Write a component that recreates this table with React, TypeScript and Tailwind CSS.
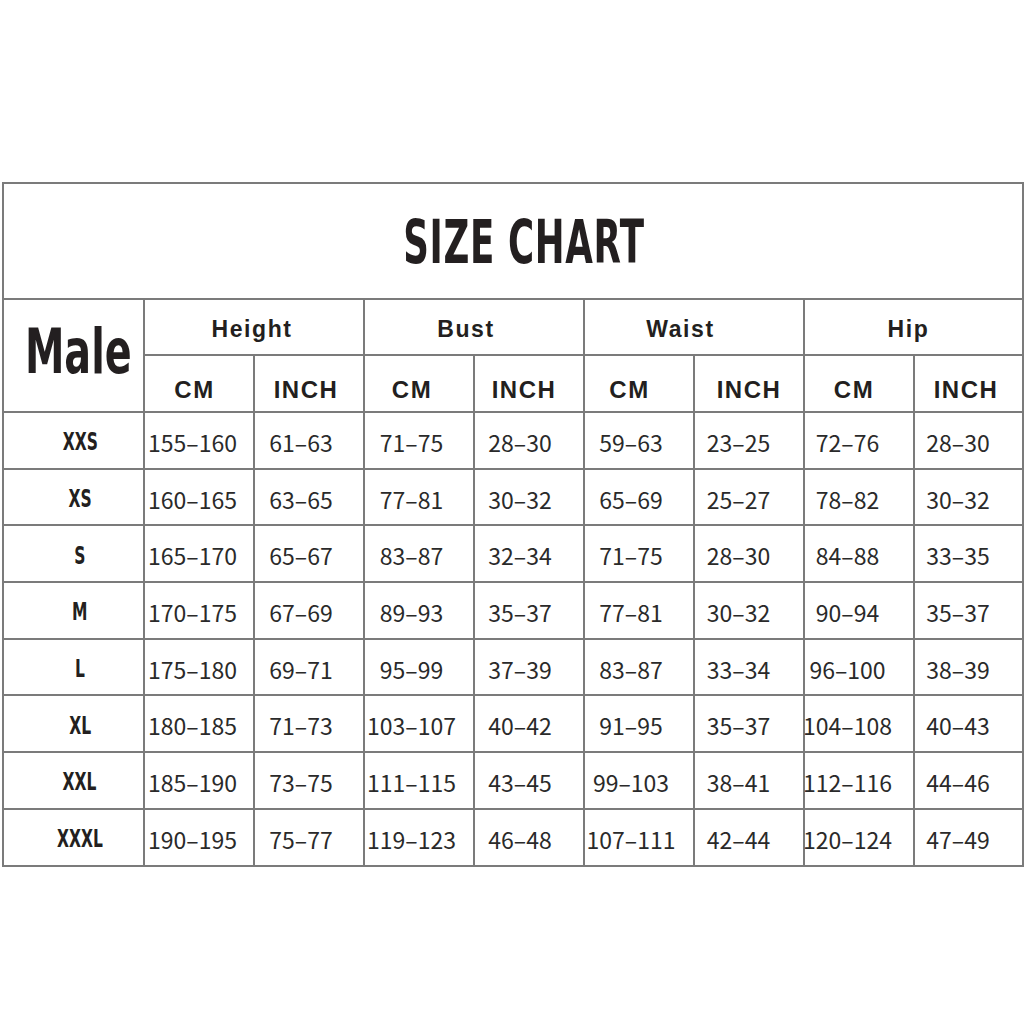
import React from "react";

const rows: [string, string[]][] = [
  ["XXS", ["155–160", "61–63", "71–75", "28–30", "59–63", "23–25", "72–76", "28–30"]],
  ["XS", ["160–165", "63–65", "77–81", "30–32", "65–69", "25–27", "78–82", "30–32"]],
  ["S", ["165–170", "65–67", "83–87", "32–34", "71–75", "28–30", "84–88", "33–35"]],
  ["M", ["170–175", "67–69", "89–93", "35–37", "77–81", "30–32", "90–94", "35–37"]],
  ["L", ["175–180", "69–71", "95–99", "37–39", "83–87", "33–34", "96–100", "38–39"]],
  ["XL", ["180–185", "71–73", "103–107", "40–42", "91–95", "35–37", "104–108", "40–43"]],
  ["XXL", ["185–190", "73–75", "111–115", "43–45", "99–103", "38–41", "112–116", "44–46"]],
  ["XXXL", ["190–195", "75–77", "119–123", "46–48", "107–111", "42–44", "120–124", "47–49"]],
];

const groups = [
  { name: "Height", pad: "pr-[4px]" },
  { name: "Bust", pad: "pr-[16px]" },
  { name: "Waist", pad: "pr-[27px]" },
  { name: "Hip", pad: "pr-[10px]" },
];

const subPads = ["pr-[9px]", "pr-[6px]", "pr-[14px]", "pr-[10px]", "pr-[19px]", "pr-[0px]", "pr-[10px]", "pr-[5px]"];
const numPads = ["pr-[13px]", "pr-[16px]", "pr-[15px]", "pr-[18px]", "pr-[16px]", "pr-[21px]", "pr-[23px]", "pr-[21px]"];

const narrow = "font-['DejaVu_Sans_Condensed','DejaVu_Sans',sans-serif] font-bold text-[#231f20]";
const din = "font-['Liberation_Sans',Arial,sans-serif] font-bold text-[#231f20]";
const num = "font-['Noto_Sans_CJK_SC','Noto_Sans',sans-serif] font-normal text-[#2a2a2a]";

const App = () => {
  return (
    <div className="w-[1024px] h-[1024px] bg-white pt-[182px] pl-[2px]">
      <div className="grid grid-cols-[139px_repeat(7,108px)_107px] grid-rows-[114px_54px_55px_repeat(8,54.7px)] gap-[2px] p-[2px] bg-[#7b7b7b] w-[1022px]">
        <div className="col-span-9 bg-white flex items-center justify-center pl-[22px] pt-[2px]">
          <span className={`${narrow} inline-block whitespace-nowrap text-[60px] leading-none scale-x-[0.66] tracking-[1px]`}>
            SIZE CHART
          </span>
        </div>

        <div className="row-span-2 bg-white flex items-center justify-center pl-[10px] pb-[8px]">
          <span className={`${narrow} inline-block text-[63px] leading-none scale-x-[0.7]`}>Male</span>
        </div>
        {groups.map((g) => (
          <div
            key={g.name}
            className={`col-span-2 bg-white flex items-center justify-center pt-[4px] ${g.pad}`}
          >
            <span className={`${din} text-[23px] tracking-[1.6px] leading-none`}>{g.name}</span>
          </div>
        ))}
        {subPads.map((p, i) => (
          <div key={i} className={`bg-white flex items-center justify-center pt-[12px] ${p}`}>
            <span className={`${din} text-[24px] tracking-[1.5px] leading-none`}>
              {i % 2 === 0 ? "CM" : "INCH"}
            </span>
          </div>
        ))}

        {rows.map(([size, vals]) => (
          <React.Fragment key={size}>
            <div className="bg-white flex items-center justify-center pl-[13px] pt-[4px]">
              <span className={`${narrow} inline-block text-[24px] leading-none scale-x-[0.72]`}>{size}</span>
            </div>
            {vals.map((v, i) => (
              <div key={i} className={`bg-white flex items-center justify-center pt-[4px] ${numPads[i]}`}>
                <span className={`${num} whitespace-nowrap text-[23px] leading-none`}>{v}</span>
              </div>
            ))}
          </React.Fragment>
        ))}
      </div>
    </div>
  );
};

export default App;
